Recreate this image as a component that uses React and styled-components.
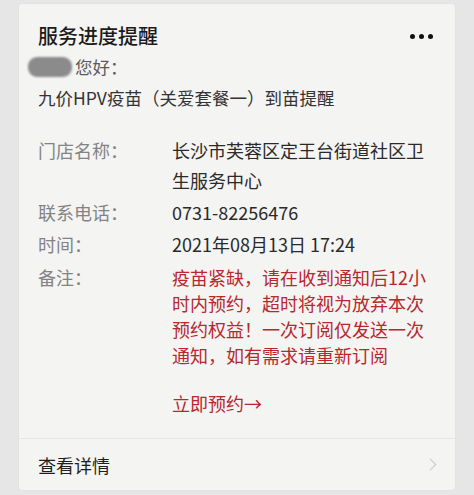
import React from "react"
import styled, {createGlobalStyle} from "styled-components"

const GlobalStyle = createGlobalStyle`
	html, body {
		margin: 0;
		padding: 0;
		background: #e6e6e6;
	}
	body {
		font-family: "Noto Sans CJK SC", "Noto Sans", sans-serif;
	}
`

const rows = [
	{label: "门店名称：", value: "长沙市芙蓉区定王台街道社区卫生服务中心"},
	{label: "联系电话：", value: "0731-82256476"},
	{label: "时间：", value: "2021年08月13日 17:24"},
]

export default function App() {
	return (
		<Page>
			<GlobalStyle />
			<Card>
				<Body>
					<Header>
						<Title>服务进度提醒</Title>
						<Dots><i /><i /><i /></Dots>
					</Header>
					<Greeting>
						<Blur />您好：
					</Greeting>
					<Subject>九价HPV疫苗（关爱套餐一）到苗提醒</Subject>
					<Fields>
						{rows.map(r => (
							<Row key={r.label}>
								<Label>{r.label}</Label>
								<Value>{r.value}</Value>
							</Row>
						))}
						<Row $dense>
							<Label>备注：</Label>
							<Value $red>
								疫苗紧缺，请在收到通知后12小时内预约，超时将视为放弃本次预约权益！一次订阅仅发送一次通知，如有需求请重新订阅
							</Value>
						</Row>
					</Fields>
					<Action>立即预约→</Action>
				</Body>
				<Footer>
					<span>查看详情</span>
					<Chevron viewBox="0 0 10 16">
						<path d="M2 1.5 L8.5 8 L2 14.5" fill="none" stroke="#cfcfcf" strokeWidth="1.4" />
					</Chevron>
				</Footer>
			</Card>
		</Page>
	)
}

const Page = styled.div`
	width: 474px;
	height: 495px;
	padding: 4px 0 0 19px;
	box-sizing: border-box;
	overflow: hidden;
`

const Card = styled.div`
	width: 436px;
	height: 486px;
	background: #f4f4f3;
	border-radius: 3px;
	box-shadow: 0 0 2px rgba(0, 0, 0, 0.06);
	display: flex;
	flex-direction: column;
	overflow: hidden;
`

const Body = styled.div`
	padding: 18px 22px 0 19px;
	flex: 1;
`

const Header = styled.div`
	display: flex;
	align-items: center;
	justify-content: space-between;
	height: 28px;
`

const Title = styled.div`
	font-size: 20px;
	font-weight: 500;
	color: #1b1b1b;
	line-height: 28px;
`

const Dots = styled.div`
	display: flex;
	gap: 4px;
	margin-right: 0;
	i {
		width: 5px;
		height: 5px;
		border-radius: 50%;
		background: #111;
	}
`

const Greeting = styled.div`
	margin-top: 2px;
	font-size: 17.5px;
	line-height: 30px;
	color: #5a5a5a;
	display: flex;
	align-items: center;
`

const Blur = styled.span`
	display: inline-block;
	width: 44px;
	height: 20px;
	margin-left: -10px;
	margin-right: 3px;
	border-radius: 9px;
	background: #8b8b8b;
	filter: blur(1.2px);
`

const Subject = styled.div`
	font-size: 17.5px;
	line-height: 31px;
	color: #333;
`

const Fields = styled.div`
	margin-top: 22px;
	display: flex;
	flex-direction: column;
	gap: 2px;
`

const Row = styled.div`
	display: grid;
	grid-template-columns: 134px 1fr;
	font-size: 18px;
	line-height: ${p => (p.$dense ? "26px" : "30px")};
	margin-top: ${p => (p.$dense ? "3px" : "0")};
`

const Label = styled.div`
	color: #838383;
	white-space: nowrap;
`

const Value = styled.div`
	color: ${p => (p.$red ? "#b8272d" : "#2a2a2a")};
	word-break: break-all;
`

const Action = styled.div`
	margin: 20px 0 0 134px;
	font-size: 18px;
	line-height: 30px;
	color: #b8272d;
`

const Footer = styled.div`
	height: 52px;
	border-top: 1px solid #e6e6e6;
	box-sizing: border-box;
	padding: 0 18px 0 19px;
	display: flex;
	align-items: center;
	justify-content: space-between;
	font-size: 18px;
	color: #1e1e1e;
`

const Chevron = styled.svg`
	width: 9px;
	height: 15px;
`
